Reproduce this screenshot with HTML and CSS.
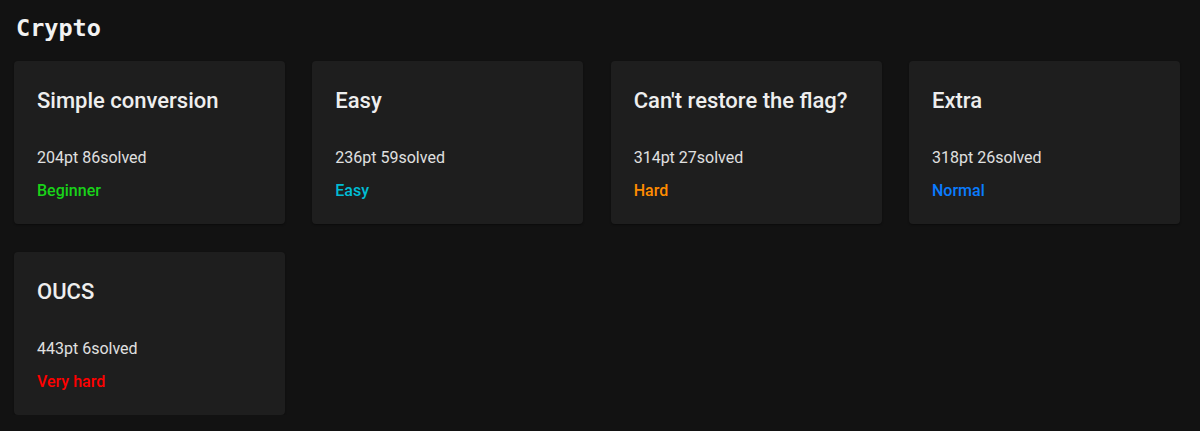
FILE: index.html
```html
<!DOCTYPE html>
<html lang="en">
<head>
<meta charset="utf-8">
<title>Crypto</title>
<link rel="stylesheet" href="styles.css">
</head>
<body>
<main class="page">
  <h2 class="category">Crypto</h2>
  <div class="grid">
    <div class="card">
      <h3 class="card-title">Simple conversion</h3>
      <p class="stats">204pt 86solved</p>
      <p class="level beginner">Beginner</p>
    </div>
    <div class="card">
      <h3 class="card-title">Easy</h3>
      <p class="stats">236pt 59solved</p>
      <p class="level easy">Easy</p>
    </div>
    <div class="card">
      <h3 class="card-title">Can't restore the flag?</h3>
      <p class="stats">314pt 27solved</p>
      <p class="level hard">Hard</p>
    </div>
    <div class="card">
      <h3 class="card-title">Extra</h3>
      <p class="stats">318pt 26solved</p>
      <p class="level normal">Normal</p>
    </div>
    <div class="card">
      <h3 class="card-title">OUCS</h3>
      <p class="stats">443pt 6solved</p>
      <p class="level very-hard">Very hard</p>
    </div>
  </div>
</main>
</body>
</html>
```
FILE: styles.css
```css
html, body {
  margin: 0;
  padding: 0;
  background: #121212;
}
body {
  font-family: Roboto, "Liberation Sans", sans-serif;
  color: #e6e6e6;
}
.page {
  padding: 13px 20px 0 14px;
}
.category {
  margin: 0 0 18px 2px;
  font-family: "DejaVu Sans Mono", "Liberation Mono", monospace;
  font-weight: bold;
  font-size: 23.5px;
  line-height: 30px;
  color: #f2f2f2;
}
.grid {
  display: grid;
  grid-template-columns: repeat(4, 1fr);
  gap: 28px 27.33px;
}
.card {
  background: #1e1e1e;
  border-radius: 4px;
  padding: 26px 23px 21px 23px;
  box-shadow: 0 1px 2px rgba(0,0,0,0.4);
  height: 163px;
  box-sizing: border-box;
}
.card-title {
  margin: 0 0 31px 0;
  font-size: 22px;
  line-height: 28px;
  font-weight: 500;
  color: #eeeeee;
}
.stats {
  margin: 0 0 9px 0;
  font-size: 16px;
  line-height: 24px;
  color: #e0e0e0;
}
.level {
  margin: 0;
  font-size: 16px;
  line-height: 24px;
  font-weight: 500;
}
.beginner { color: #19d219; }
.easy { color: #00bcd4; }
.hard { color: #ff8c00; }
.normal { color: #0a7cff; }
.very-hard { color: #ff0000; }
```
